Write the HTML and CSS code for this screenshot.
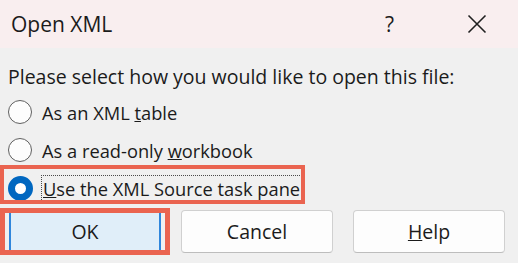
FILE: index.html
```html
<!DOCTYPE html>
<html>
<head>
<meta charset="utf-8">
<link rel="stylesheet" href="styles.css">
</head>
<body>
<div class="dialog">
  <div class="titlebar">
    <span class="title">Open XML</span>
    <span class="help-q">?</span>
    <span class="close">
      <svg width="20" height="20" viewBox="0 0 20 20"><path d="M1.5 1.5 L18.5 18.5 M18.5 1.5 L1.5 18.5" stroke="#1f1f1f" stroke-width="1.6" fill="none"/></svg>
    </span>
  </div>
  <div class="content">
    <div class="prompt">Please select how you would like to open this file:</div>
    <div class="row"><span class="radio"></span><span class="label">As an XML <u>t</u>able</span></div>
    <div class="row"><span class="radio"></span><span class="label">As a read-only <u>w</u>orkbook</span></div>
    <div class="row"><span class="radio checked"></span><span class="label focus"><u>U</u>se the XML Source task pane</span></div>
    <div class="buttons">
      <div class="btn primary">OK</div>
      <div class="btn">Cancel</div>
      <div class="btn"><u>H</u>elp</div>
    </div>
  </div>
  <div class="annot annot-row"></div>
  <div class="annot annot-ok"></div>
</div>
</body>
</html>
```
FILE: styles.css
```css
html, body {
  margin: 0;
  padding: 0;
}
body {
  width: 518px;
  height: 263px;
  overflow: hidden;
  background: #f0f0f0;
  font-family: "Open Sans", "Noto Sans", sans-serif;
  color: #1b1b1b;
}
.dialog {
  position: relative;
  width: 518px;
  height: 263px;
}
.titlebar {
  height: 48px;
  background: #f9eeef;
  display: flex;
  align-items: center;
  padding-left: 11px;
}
.title {
  font-size: 21px;
  flex: 1;
}
.help-q {
  font-size: 21px;
  width: 12px;
  margin-right: 70px;
}
.close {
  display: flex;
  width: 20px;
  height: 20px;
  margin-right: 31px;
}
.content {
  padding: 16px 0 0 8px;
  display: flex;
  flex-direction: column;
}
.prompt {
  font-size: 19.5px;
  line-height: 26px;
  height: 26px;
  padding-bottom: 3px;
  white-space: nowrap;
}
.row {
  height: 38px;
  display: flex;
  align-items: center;
  font-size: 18.3px;
  white-space: nowrap;
}
.radio {
  width: 24px;
  height: 24px;
  box-sizing: border-box;
  border: 1.5px solid #5f5f5f;
  border-radius: 50%;
  background: #fdfdfd;
  margin-right: 8px;
  flex: none;
}
.radio.checked {
  width: 25px;
  height: 25px;
  border: 7.5px solid #0067c0;
  background: #fff;
}
.label {
  line-height: 25px;
  padding: 0 1px;
  border: 1px solid transparent;
}
.label.focus {
  border: 1px dotted #4a4a4a;
}
.buttons {
  display: flex;
  gap: 20px;
  margin-top: 3px;
  padding-left: 1px;
}
.btn {
  width: 152px;
  height: 43px;
  box-sizing: border-box;
  border: 1px solid #d0d0d0;
  border-bottom-color: #bdbdbd;
  border-radius: 4px;
  background: #fdfdfd;
  display: flex;
  align-items: center;
  justify-content: center;
  font-size: 19.5px;
}
.btn.primary {
  background: #e0eef9;
  border: 2px solid #2f86dc;
  border-radius: 2px;
}
.annot {
  position: absolute;
  box-sizing: border-box;
  border: 5px solid #ea6450;
}
.annot-row {
  left: 0;
  top: 165px;
  width: 305px;
  height: 39px;
  border-width: 4px;
}
.annot-ok {
  left: 0;
  top: 208px;
  width: 170px;
  height: 47px;
}
```
